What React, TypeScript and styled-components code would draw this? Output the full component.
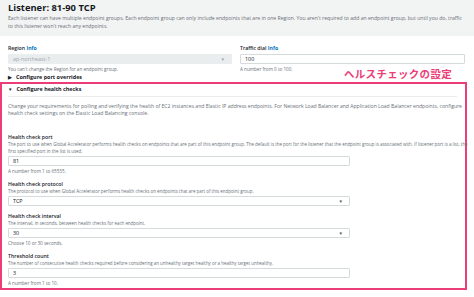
import React from "react";
import styled, { createGlobalStyle } from "styled-components";

const GlobalStyle = createGlobalStyle`
  html, body {
    margin: 0;
    padding: 0;
    background: #ffffff;
  }
  body {
    font-family: "Open Sans", "Noto Sans", sans-serif;
    color: #16191f;
  }
`;

type Field = {
  label: string;
  desc: string[];
  value: string;
  select?: boolean;
  caption?: string;
};

const fields: Field[] = [
  {
    label: "Health check port",
    desc: [
      "The port to use when Global Accelerator performs health checks on endpoints that are part of this endpoint group. The default is the port for the listener that the endpoint group is associated with. If listener port is a list, the",
      "first specified port in the list is used.",
    ],
    value: "81",
    caption: "A number from 1 to 65535.",
  },
  {
    label: "Health check protocol",
    desc: ["The protocol to use when Global Accelerator performs health checks on endpoints that are part of this endpoint group."],
    value: "TCP",
    select: true,
  },
  {
    label: "Health check interval",
    desc: ["The interval, in seconds, between health checks for each endpoint."],
    value: "30",
    select: true,
    caption: "Choose 10 or 30 seconds.",
  },
  {
    label: "Threshold count",
    desc: ["The number of consecutive health checks required before considering an unhealthy target healthy or a healthy target unhealthy."],
    value: "3",
    caption: "A number from 1 to 10.",
  },
];

const App = () => {
  return (
    <Page>
      <GlobalStyle />
      <Header>
        <Title>Listener: 81-90 TCP</Title>
        <HeaderText>
          Each listener can have multiple endpoint groups. Each endpoint group can only include endpoints that are in one Region. You aren't required to add an endpoint group, but until you do, traffic
        </HeaderText>
        <HeaderText>to this listener won't reach any endpoints.</HeaderText>
      </Header>

      <Body>
        <TopRow>
          <Column>
            <Label>
              Region <InfoLink>Info</InfoLink>
            </Label>
            <InputBox $disabled>
              ap-northeast-1
              <Arrow $disabled>▼</Arrow>
            </InputBox>
            <Caption>You can't change the Region for an endpoint group.</Caption>
          </Column>
          <Column>
            <Label>
              Traffic dial <InfoLink>Info</InfoLink>
            </Label>
            <InputBox>100</InputBox>
            <Caption>A number from 0 to 100.</Caption>
          </Column>
        </TopRow>

        <Expander>
          <Caret>▶</Caret> Configure port overrides
        </Expander>
      </Body>

      <Highlight>
        <Note>ヘルスチェックの設定</Note>
        <Expander $open>
          <Caret>▼</Caret> Configure health checks
        </Expander>
        <Intro>
          <Desc>
            Change your requirements for polling and verifying the health of EC2 instances and Elastic IP address endpoints. For Network Load Balancer and Application Load Balancer endpoints, configure
          </Desc>
          <Desc>health check settings on the Elastic Load Balancing console.</Desc>
        </Intro>

        {fields.map((f) => (
          <FieldBlock key={f.label}>
            <Label>{f.label}</Label>
            {f.desc.map((d) => (
              <SmallDesc key={d}>{d}</SmallDesc>
            ))}
            <InputBox $narrow>
              {f.value}
              {f.select && <Arrow>▼</Arrow>}
            </InputBox>
            {f.caption && <Caption>{f.caption}</Caption>}
          </FieldBlock>
        ))}
      </Highlight>
    </Page>
  );
};

const Page = styled.div`
  position: relative;
  width: 474px;
  height: 297px;
  overflow: hidden;
  background: #ffffff;
`;

const Header = styled.div`
  height: 36px;
  box-sizing: border-box;
  padding: 2px 8px 0;
  background: #f2f3f3;
`;

const Title = styled.div`
  font-size: 9.4px;
  line-height: 12px;
  font-weight: 700;
  color: #16191f;
  margin-bottom: 1px;
`;

const HeaderText = styled.div`
  font-size: 5.12px;
  line-height: 8px;
  color: #687078;
  white-space: nowrap;
`;

const Body = styled.div`
  padding: 9px 8px 0;
`;

const TopRow = styled.div`
  display: grid;
  grid-template-columns: 224px 225px;
  column-gap: 8px;
`;

const Column = styled.div`
  display: flex;
  flex-direction: column;
`;

const Label = styled.div`
  font-size: 5.2px;
  line-height: 7px;
  font-weight: 600;
  color: #16191f;
`;

const InfoLink = styled.span`
  color: #0073bb;
  font-weight: 700;
`;

const InputBox = styled.div<{ $disabled?: boolean; $narrow?: boolean }>`
  position: relative;
  box-sizing: border-box;
  height: 10px;
  width: ${({ $narrow }) => ($narrow ? "342px" : "100%")};
  margin-top: 2px;
  padding: 0 4px;
  border: 1px solid ${({ $disabled }) => ($disabled ? "#eaeded" : "#d5dbdb")};
  border-radius: 1px;
  background: ${({ $disabled }) => ($disabled ? "#eaeded" : "#ffffff")};
  color: ${({ $disabled }) => ($disabled ? "#9ba7b0" : "#16191f")};
  font-size: 5.4px;
  line-height: 8px;
`;

const Arrow = styled.span<{ $disabled?: boolean }>`
  position: absolute;
  right: 6px;
  top: 0;
  font-size: 4.5px;
  line-height: 8px;
  color: ${({ $disabled }) => ($disabled ? "#9ba7b0" : "#545b64")};
`;

const Caption = styled.div`
  margin-top: 2px;
  font-size: 4.6px;
  line-height: 6px;
  color: #687078;
`;

const Expander = styled.div<{ $open?: boolean }>`
  display: flex;
  align-items: center;
  gap: 4px;
  height: 8px;
  margin-top: 1px;
  padding-bottom: ${({ $open }) => ($open ? "3px" : "0")};
  border-bottom: ${({ $open }) => ($open ? "1px solid #eaeded" : "none")};
  font-size: 5.4px;
  line-height: 8px;
  font-weight: 700;
  color: #16191f;
`;

const Caret = styled.span`
  font-size: 4.5px;
  line-height: 8px;
`;

const Highlight = styled.div`
  position: relative;
  box-sizing: border-box;
  width: 467px;
  height: 208px;
  margin-top: 1px;
  padding: 0 8px 0 6px;
  border: 2px solid #ec3d76;
`;

const Note = styled.div`
  position: absolute;
  right: 13px;
  top: -17px;
  font-family: "Noto Sans CJK JP", sans-serif;
  font-size: 10.5px;
  line-height: 13px;
  font-weight: 700;
  color: #ec3d76;
  letter-spacing: 0.3px;
`;

const Intro = styled.div`
  margin-top: 6px;
  margin-bottom: 17px;
`;

const Desc = styled.div`
  font-size: 5.08px;
  line-height: 7px;
  color: #687078;
  white-space: nowrap;
`;

const SmallDesc = styled.div`
  font-size: 4.45px;
  line-height: 6.5px;
  color: #687078;
  white-space: nowrap;
`;

const FieldBlock = styled.div`
  display: flex;
  flex-direction: column;
  margin-bottom: 6.5px;
`;

export default App;
